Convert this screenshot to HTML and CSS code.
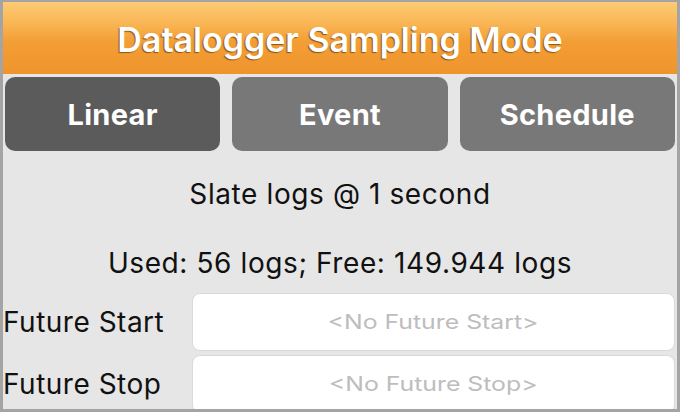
FILE: index.html
```html
<!DOCTYPE html>
<html>
<head>
<meta charset="utf-8">
<link rel="stylesheet" href="styles.css">
</head>
<body>
<div class="panel">
  <div class="header">Datalogger Sampling Mode</div>
  <div class="modes">
    <div class="mode active">Linear</div>
    <div class="mode">Event</div>
    <div class="mode">Schedule</div>
  </div>
  <div class="info">
    <div class="line">Slate logs @ 1 second</div>
    <div class="line">Used: 56 logs; Free: 149.944 logs</div>
  </div>
  <div class="rows">
    <div class="row">
      <div class="label">Future Start</div>
      <div class="field"><span class="placeholder">&lt;No Future Start&gt;</span></div>
    </div>
    <div class="row">
      <div class="label">Future Stop</div>
      <div class="field"><span class="placeholder">&lt;No Future Stop&gt;</span></div>
    </div>
  </div>
</div>
</body>
</html>
```
FILE: styles.css
```css
html, body {
  margin: 0;
  padding: 0;
}
body {
  width: 680px;
  height: 412px;
  font-family: Inter, "Noto Sans", sans-serif;
}
.panel {
  box-sizing: border-box;
  width: 680px;
  height: 412px;
  border-style: solid;
  border-color: #a4a4a4;
  border-width: 2px 3px 3px 3px;
  background: #e6e6e6;
  overflow: hidden;
  display: flex;
  flex-direction: column;
}
.header {
  height: 72px;
  flex: none;
  box-sizing: border-box;
  padding-top: 3px;
  display: flex;
  align-items: center;
  justify-content: center;
  background: linear-gradient(to bottom, #fdcb74 0%, #f9b554 30%, #f39e35 55%, #ef942d 100%);
  color: #ffffff;
  font-size: 34px;
  font-weight: 600;
  text-shadow: -1px 1px 1px rgba(110, 60, 10, 0.75);
}
.modes {
  display: flex;
  gap: 12px;
  padding: 0 2px;
  margin-top: 3px;
  height: 74px;
  flex: none;
}
.mode {
  flex: 1;
  border-radius: 10px;
  background: #787878;
  color: #ffffff;
  font-size: 29px;
  font-weight: 700;
  letter-spacing: 0.3px;
  display: flex;
  align-items: center;
  justify-content: center;
}
.mode.active {
  background: #5a5b5a;
}
.info {
  height: 142px;
  flex: none;
  box-sizing: border-box;
  padding-top: 13px;
  display: flex;
  flex-direction: column;
  gap: 9px;
}
.line {
  height: 60px;
  line-height: 60px;
  text-align: center;
  color: #111111;
  font-size: 28px;
  letter-spacing: 0.6px;
}
.rows {
  display: flex;
  flex-direction: column;
  gap: 4px;
}
.row {
  height: 58px;
  flex: none;
  display: flex;
  align-items: center;
  padding-right: 2px;
}
.label {
  width: 189px;
  padding-left: 0;
  flex: none;
  color: #111111;
  font-size: 28px;
  letter-spacing: 0.5px;
}
.field {
  flex: 1;
  align-self: stretch;
  box-sizing: border-box;
  background: #ffffff;
  border: 1px solid #dadada;
  border-radius: 8px;
  display: flex;
  align-items: center;
  justify-content: center;
}
.placeholder {
  display: inline-block;
  color: #bdbdbd;
  font-size: 20px;
  transform: scaleX(1.24);
}
```
